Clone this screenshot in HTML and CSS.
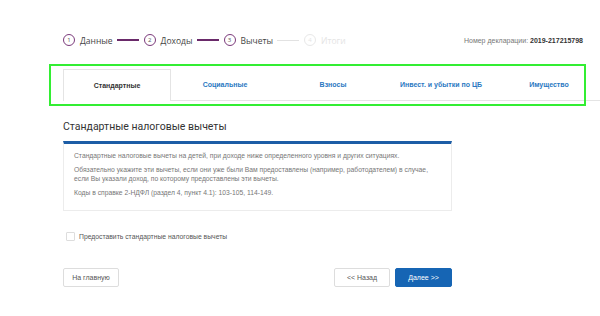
FILE: index.html
```html
<!DOCTYPE html>
<html lang="ru">
<head>
    <meta charset="UTF-8">
    <title>Вычеты</title>
    <link rel="stylesheet" href="styles.css">
</head>
<body>
    <div id="page">
        <div class="top">
            <div class="steps">
                <span class="step done"><i>1</i>Данные</span>
                <span class="line done"></span>
                <span class="step done"><i>2</i>Доходы</span>
                <span class="line done"></span>
                <span class="step done"><i>3</i>Вычеты</span>
                <span class="line"></span>
                <span class="step off"><i>4</i>Итоги</span>
            </div>
            <div class="decl">Номер декларации: <b>2019-217215798</b></div>
        </div>
        <div class="tabs">
            <span class="tab active">Стандартные</span>
            <span class="tab">Социальные</span>
            <span class="tab">Взносы</span>
            <span class="tab">Инвест. и убытки по ЦБ</span>
            <span class="tab">Имущество</span>
        </div>
        <div class="content">
            <h2>Стандартные налоговые вычеты</h2>
            <div class="info">
                <p>Стандартные налоговые вычеты на детей, при доходе ниже определенного уровня и других ситуациях.</p>
                <p>Обязательно укажите эти вычеты, если они уже были Вам предоставлены (например, работодателем) в случае, если Вы указали доход, по которому предоставлены эти вычеты.</p>
                <p>Коды в справке 2-НДФЛ (раздел 4, пункт 4.1): 103-105, 114-149.</p>
            </div>
            <label class="check"><span class="box"></span>Предоставить стандартные налоговые вычеты</label>
            <div class="buttons">
                <span class="btn">На главную</span>
                <span class="btn">&lt;&lt; Назад</span>
                <span class="btn primary">Далее &gt;&gt;</span>
            </div>
        </div>
        <div class="mark"></div>
    </div>
</body>
</html>
```
FILE: styles.css
```css
body { margin: 0; background: #fff; }
* { box-sizing: border-box; }
#page {
    position: relative;
    width: 600px;
    height: 316px;
    overflow: hidden;
    font-family: "Liberation Sans", Arial, sans-serif;
    color: #333;
}
.top {
    display: flex;
    justify-content: space-between;
    align-items: center;
    padding: 32px 17px 0 63px;
    height: 48px;
}
.steps {
    display: flex;
    align-items: center;
    font-family: "Open Sans", sans-serif;
    font-size: 8.5px;
    color: #444;
}
.step {
    display: flex;
    align-items: center;
}
.step i {
    display: inline-flex;
    justify-content: center;
    align-items: center;
    width: 12px;
    height: 12px;
    border: 1.2px solid #7b3a7b;
    border-radius: 50%;
    font-style: normal;
    font-size: 6px;
    margin-right: 5px;
    color: #555;
}
.step.off { color: #e4e4e4; }
.step.off i { border-color: #e8e8e8; color: #e4e4e4; }
.line {
    width: 22px;
    height: 1px;
    background: #e2e2e2;
    margin: 0 5px 0 4px;
}
.line.done { height: 1.5px; background: #6a2a6a; }
.decl {
    font-size: 7px;
    color: #777;
}
.decl b { color: #333; }
.tabs {
    display: flex;
    margin: 21px 0 0 63px;
    height: 32px;
    border-bottom: 1px solid #e4e4e4;
    width: 540px;
}
.tab {
    width: 108px;
    flex: none;
    display: flex;
    justify-content: center;
    align-items: center;
    font-size: 7px;
    font-weight: bold;
    color: #2a78c2;
}
.tab.active {
    color: #333;
    border: 1px solid #e4e4e4;
    border-bottom: none;
    background: #fff;
    margin-bottom: -1px;
}
.content {
    width: 389px;
    margin-left: 63px;
}
h2 {
    margin: 17px 0 0;
    font-family: Roboto, sans-serif;
    font-weight: normal;
    font-size: 10.5px;
    line-height: 18px;
    color: #333;
}
.info {
    margin-top: 5px;
    border: 1px solid #ececec;
    border-top: 3px solid #1c5da6;
    padding: 7px 9px 10px 10px;
    height: 70px;
    font-size: 6.75px;
    line-height: 9px;
    color: #777;
}
.info p { margin: 0 0 5px; }
.check {
    display: flex;
    align-items: center;
    margin: 21px 0 0 3px;
    font-size: 6.8px;
    color: #555;
}
.check .box {
    width: 9px;
    height: 9px;
    border: 1px solid #ddd;
    border-radius: 1px;
    margin-right: 4px;
}
.buttons {
    display: flex;
    margin-top: 27px;
}
.btn {
    display: flex;
    justify-content: center;
    align-items: center;
    height: 19px;
    width: 56px;
    border: 1px solid #ddd;
    border-radius: 2px;
    font-size: 7px;
    color: #555;
}
.btn:nth-child(2) { margin-left: auto; margin-right: 5px; }
.btn.primary {
    width: 57px;
    background: #1665b4;
    border-color: #1665b4;
    color: #fff;
}
.mark {
    position: absolute;
    left: 49px;
    top: 64px;
    width: 537px;
    height: 42px;
    border: 2px solid #33ee33;
}
```
